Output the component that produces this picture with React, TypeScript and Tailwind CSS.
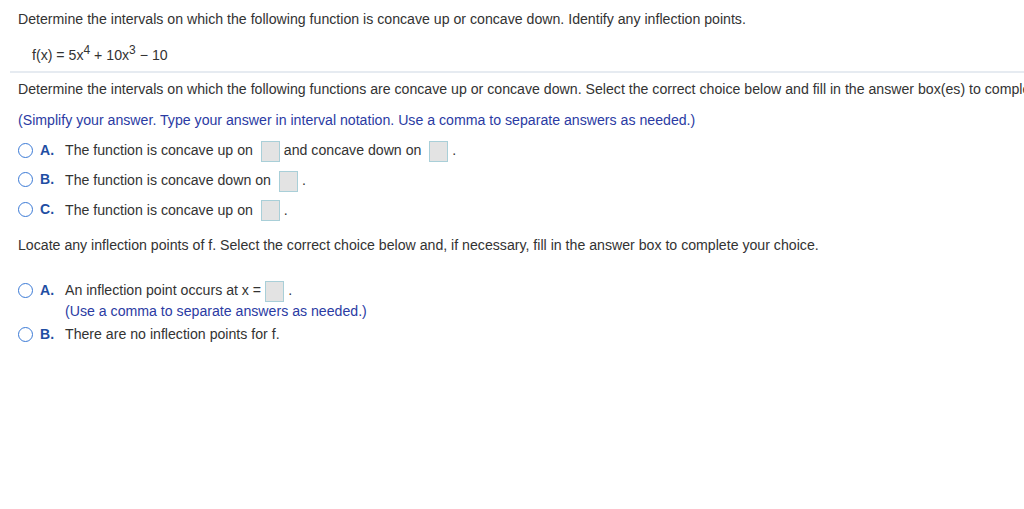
import React from 'react'

const Box = () => (
  <span className="inline-block w-[19px] h-[21px] bg-[#e3e3e3] border border-[#a9cfd8] align-middle mx-[4px]" />
)

const Radio = () => (
  <span className="inline-block w-[15px] h-[15px] rounded-full border-[1.5px] border-[#3b7ad6] bg-white shrink-0" />
)

const Choice = ({ letter, children }: { letter: string; children: React.ReactNode }) => (
  <div className="flex items-start">
    <div className="flex items-center h-[22px] pl-[18px] w-[65px] shrink-0">
      <Radio />
      <span className="ml-[7px] font-bold text-[#1f4ea3] text-[14px]">{letter}.</span>
    </div>
    <div className="leading-[22px]">{children}</div>
  </div>
)

export default function App() {
  return (
    <div
      className="w-[1024px] h-[509px] bg-white text-[14.15px] text-[#333] overflow-hidden"
      style={{ fontFamily: '"Liberation Sans", Arial, sans-serif' }}
    >
      <div className="pl-[18px] pt-[11px] leading-[16px]">
        Determine the intervals on which the following function is concave up or concave down. Identify any inflection points.
      </div>
      <div className="pl-[32px] mt-[20px] leading-[16px] whitespace-nowrap">
        f(x) = 5x<sup className="text-[12px] -top-[6px]">4</sup> + 10x<sup className="text-[12px] -top-[6px]">3</sup> − 10
      </div>
      <div className="ml-[10px] mt-[8px] h-[2px] bg-[#e6ebf1]" />

      <div className="pl-[18px] mt-[8px] leading-[16px] whitespace-nowrap">
        Determine the intervals on which the following functions are concave up or concave down. Select the correct choice below and fill in the answer box(es) to complete your choice.
      </div>
      <div className="pl-[18px] mt-[15px] leading-[16px] text-[#2b3ba3]">
        (Simplify your answer. Type your answer in interval notation. Use a comma to separate answers as needed.)
      </div>

      <div className="mt-[11px] flex flex-col gap-[7px]">
        <Choice letter="A">
          The function is concave up on <Box />and concave down on <Box />.
        </Choice>
        <Choice letter="B">
          The function is concave down on <Box />.
        </Choice>
        <Choice letter="C">
          The function is concave up on <Box />.
        </Choice>
      </div>

      <div className="pl-[18px] mt-[16px] leading-[16px] whitespace-nowrap">
        Locate any inflection points of f. Select the correct choice below and, if necessary, fill in the answer box to complete your choice.
      </div>

      <div className="mt-[26px] flex flex-col gap-[4px]">
        <Choice letter="A">
          <div>
            An inflection point occurs at x =<Box />.
          </div>
          <div className="text-[#2b3ba3] leading-[16px] mt-[1px]">(Use a comma to separate answers as needed.)</div>
        </Choice>
        <Choice letter="B">There are no inflection points for f.</Choice>
      </div>
    </div>
  )
}
